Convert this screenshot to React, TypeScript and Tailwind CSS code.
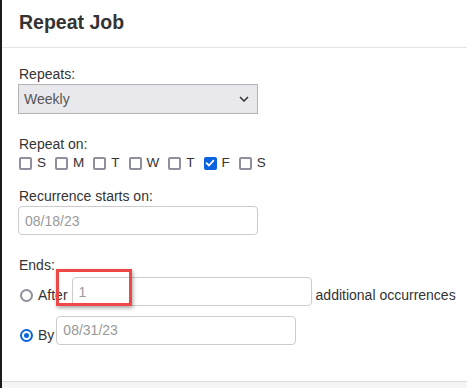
import React from "react"

const days = ["S", "M", "T", "W", "T", "F", "S"]

const Check = ({ on }: { on?: boolean }) =>
    on ? (
        <span className="inline-flex h-[13px] w-[13px] items-center justify-center rounded-[2px] bg-[#0b64dd]">
            <svg width="10" height="10" viewBox="0 0 10 10">
                <path d="M1.6 5.2 L4 7.5 L8.4 2.6" fill="none" stroke="#fff" strokeWidth="1.8" strokeLinecap="round" strokeLinejoin="round" />
            </svg>
        </span>
    ) : (
        <span className="inline-block h-[13px] w-[13px] rounded-[2px] border-2 border-[#8f8f9d] bg-white" />
    )

const Radio = ({ on }: { on?: boolean }) =>
    on ? (
        <span className="inline-flex h-[13px] w-[13px] items-center justify-center rounded-full bg-[#0b64dd]">
            <span className="inline-flex h-[9px] w-[9px] items-center justify-center rounded-full bg-white">
                <span className="h-[5px] w-[5px] rounded-full bg-[#0b64dd]" />
            </span>
        </span>
    ) : (
        <span className="inline-block h-[13px] w-[13px] rounded-full border-2 border-[#8f8f9d] bg-white" />
    )

const TextBox = ({ value }: { value: string }) => (
    <div className="flex h-[29px] w-[240px] shrink-0 items-center rounded-[4px] border border-[#cccccc] bg-white px-[6px] text-[14px] text-[#999999]">
        {value}
    </div>
)

export default function App() {
    return (
        <div className="flex h-[388px] w-[467px] bg-[#1c1c1c] font-['Liberation_Sans',Arial,sans-serif] text-[#333333]">
            <div className="ml-[2px] flex flex-1 flex-col bg-white">
                <div className="flex h-[48px] items-center border-b border-[#e5e5e5] px-[17px] pb-[2px]">
                    <h4 className="text-[19.5px] font-bold leading-none text-[#333333]">Repeat Job</h4>
                </div>

                <div className="relative flex-1 px-[16px] pt-[16px] text-[14px] leading-[20px]">
                    <div className="pl-[1px]">Repeats:</div>
                    <div className="flex h-[30px] w-[240px] items-center justify-between border border-[#b4b4b4] bg-[#e9e9ed] pl-[5px] pr-[8px] text-[14px] text-[#555555]">
                        <span>Weekly</span>
                        <svg width="10" height="6" viewBox="0 0 10 6">
                            <path d="M1 1 L5 5 L9 1" fill="none" stroke="#333" strokeWidth="1.5" />
                        </svg>
                    </div>

                    <div className="mt-[20px] pl-[1px]">Repeat on:</div>
                    <div className="flex items-center gap-[9px] pl-[1px] text-[13.5px]">
                        {days.map((d, i) => (
                            <label key={i} className="flex items-center gap-[5px] leading-[18px]">
                                <Check on={i === 5} />
                                <span>{d}</span>
                            </label>
                        ))}
                    </div>

                    <div className="mt-[14px] pl-[1px]">Recurrence starts on:</div>
                    <TextBox value="08/18/23" />

                    <div className="mt-[20px] pl-[1px]">Ends:</div>
                    <div className="mt-[2px] flex items-center whitespace-nowrap pl-[2px]">
                        <div className="mt-[7px] flex items-center gap-[5px]">
                            <Radio />
                            <span>After</span>
                        </div>
                        <div className="ml-[4px]">
                            <TextBox value="1" />
                        </div>
                        <span className="ml-[4px] mt-[7px]">additional occurrences</span>
                    </div>
                    <div className="mt-[9px] flex items-center whitespace-nowrap pl-[2px]">
                        <div className="mt-[10px] flex items-center gap-[5px]">
                            <Radio on />
                            <span>By</span>
                        </div>
                        <div className="ml-[2px]">
                            <TextBox value="08/31/23" />
                        </div>
                    </div>

                    <div className="absolute left-[54px] top-[221px] h-[37px] w-[76px] border-[3px] border-[#ef4646] shadow-[1px_2px_4px_rgba(0,0,0,0.35)]" />
                </div>

                <div className="h-[7px] border-t border-[#dcdcdc] bg-[#f5f5f5]" />
            </div>
        </div>
    )
}
